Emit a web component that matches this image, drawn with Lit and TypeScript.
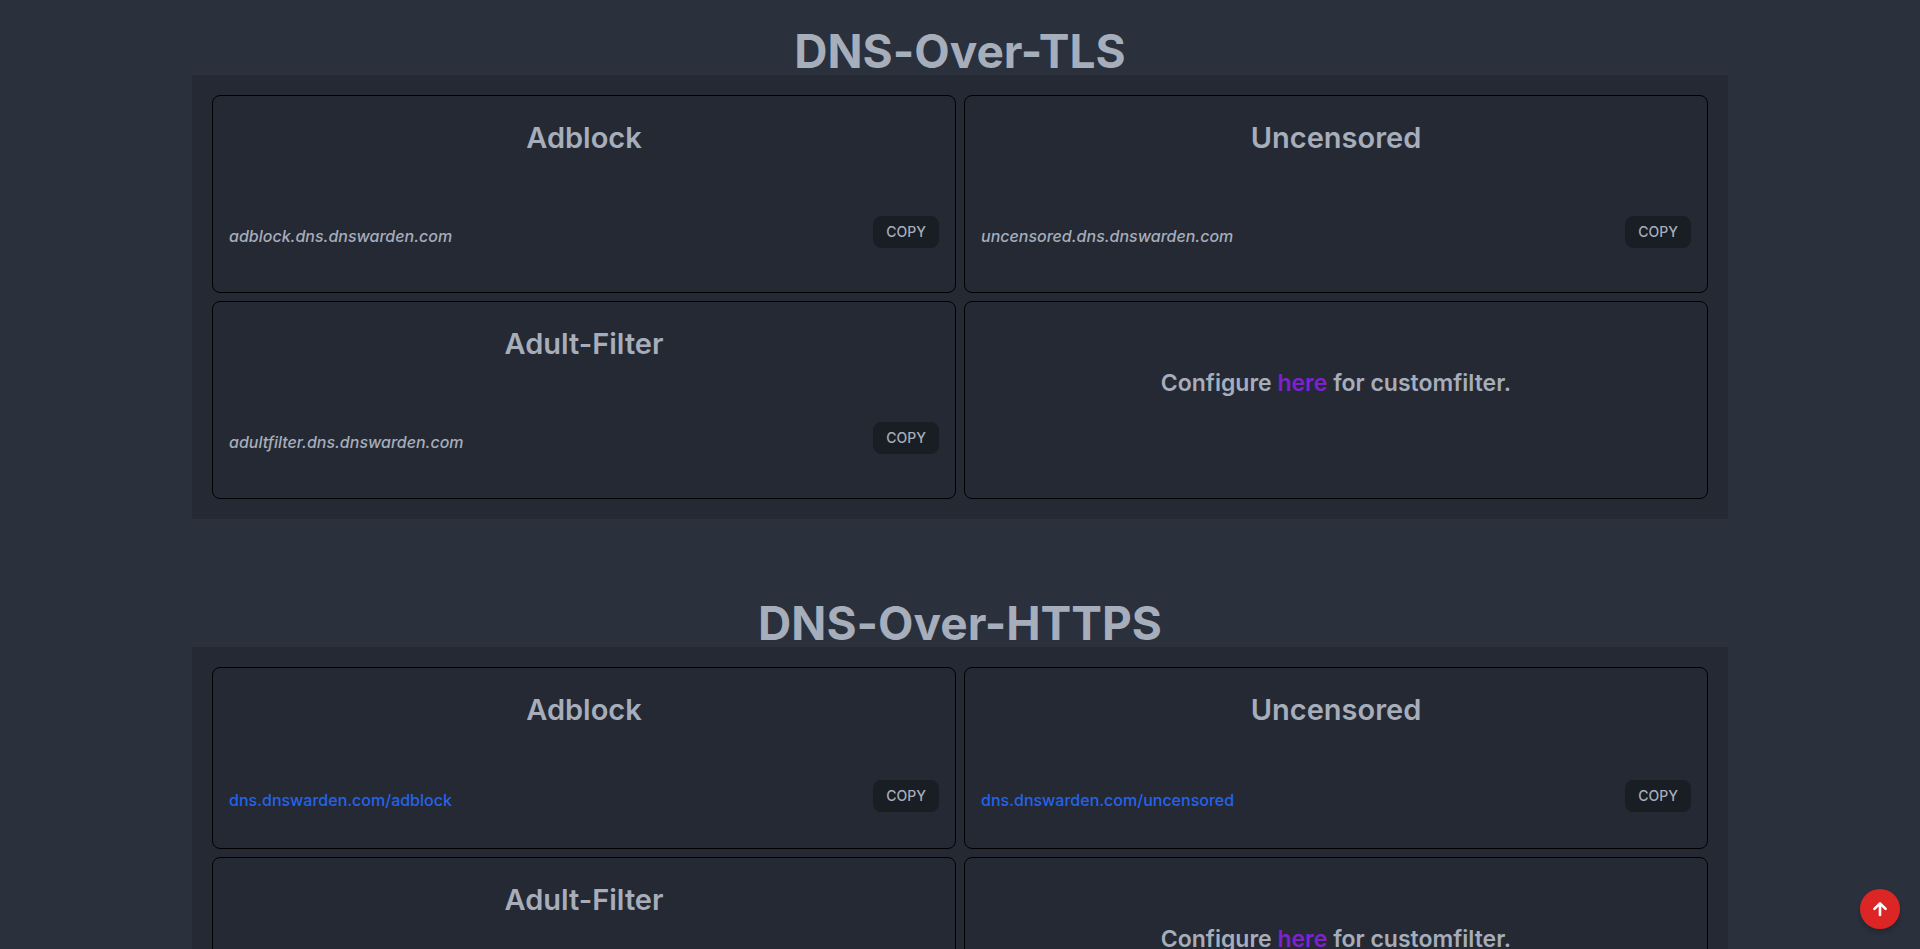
import { LitElement, html, css } from "lit";
import { customElement, property } from "lit/decorators.js";

interface Resolver {
  name: string;
  address: string;
}

const TLS: Resolver[] = [
  { name: "Adblock", address: "adblock.dns.dnswarden.com" },
  { name: "Uncensored", address: "uncensored.dns.dnswarden.com" },
  { name: "Adult-Filter", address: "adultfilter.dns.dnswarden.com" },
];

const HTTPS: Resolver[] = [
  { name: "Adblock", address: "dns.dnswarden.com/adblock" },
  { name: "Uncensored", address: "dns.dnswarden.com/uncensored" },
  { name: "Adult-Filter", address: "dns.dnswarden.com/adultfilter" },
];

@customElement("resolver-section")
export class ResolverSection extends LitElement {
  @property() heading = "";
  @property({ attribute: false }) resolvers: Resolver[] = [];
  @property({ type: Boolean }) linked = false;

  static styles = css`
    :host {
      display: block;
    }
    * {
      box-sizing: border-box;
      margin: 0;
    }
    .heading {
      font-size: 46px;
      line-height: 48px;
      font-weight: 700;
      text-align: center;
    }
    .panel {
      display: grid;
      grid-template-columns: repeat(2, minmax(0, 1fr));
      gap: 8px;
      width: 80%;
      margin: 0 auto;
      padding: 20px;
      background: #242933;
    }
    .card {
      display: flex;
      flex-direction: column;
      gap: 60px;
      padding: 24px 16px 44px;
      border: 1px solid #000;
      border-radius: 8px;
    }
    .card.compact {
      gap: 52px;
      padding-bottom: 36px;
    }
    .card.custom {
      padding-top: 64px;
    }
    .name {
      font-size: 29px;
      line-height: 36px;
      font-weight: 600;
      text-align: center;
    }
    .row {
      display: flex;
      justify-content: space-between;
      align-items: flex-end;
    }
    .address {
      font-size: 16px;
      line-height: 24px;
      font-weight: 500;
    }
    a {
      text-decoration: none;
    }
    a.address {
      color: #2563eb;
    }
    .copy {
      height: 32px;
      padding: 0 12px;
      border: 1px solid #191d24;
      border-radius: 8px;
      background: #191d24;
      color: inherit;
      font: 500 14px/14px Inter, sans-serif;
      text-transform: uppercase;
      cursor: pointer;
    }
    .note {
      font-size: 23px;
      line-height: 34px;
      font-weight: 600;
      text-align: center;
    }
    .note a {
      color: #7e22ce;
    }
  `;

  private copy(text: string) {
    navigator.clipboard?.writeText(text);
  }

  render() {
    const size = this.linked ? "compact" : "";
    return html`
      <h1 class="heading">${this.heading}</h1>
      <div class="panel">
        ${this.resolvers.map(
          (r) => html`
            <article class="card ${size}">
              <h2 class="name">${r.name}</h2>
              <div class="row">
                ${this.linked
                  ? html`<a class="address" href="https://${r.address}">${r.address}</a>`
                  : html`<em class="address">${r.address}</em>`}
                <button class="copy" @click=${() => this.copy(r.address)}>Copy</button>
              </div>
            </article>
          `
        )}
        <article class="card custom ${size}">
          <p class="note">Configure <a href="#custom">here</a> for customfilter.</p>
        </article>
      </div>
    `;
  }
}

@customElement("app-root")
export class AppRoot extends LitElement {
  static styles = css`
    :host {
      display: block;
      height: 100vh;
      overflow: hidden;
      background: #2a303c;
      color: #a6adbb;
      font-family: Inter, "Liberation Sans", sans-serif;
      font-feature-settings: "calt" 0;
    }
    .page {
      display: flex;
      flex-direction: column;
      gap: 80px;
      padding-top: 27px;
    }
    .top {
      position: fixed;
      right: 20px;
      bottom: 20px;
      display: flex;
      align-items: center;
      justify-content: center;
      width: 40px;
      height: 40px;
      padding: 0;
      border: 0;
      border-radius: 50%;
      background: #dc2626;
      color: #fff;
      box-shadow: 0 4px 6px -1px rgba(0, 0, 0, 0.2), 0 2px 4px -1px rgba(0, 0, 0, 0.1);
      cursor: pointer;
    }
    .arrow {
      display: block;
      width: 16px;
      height: 16px;
    }
  `;

  private toTop() {
    window.scrollTo({ top: 0, behavior: "smooth" });
  }

  render() {
    return html`
      <main class="page">
        <resolver-section heading="DNS-Over-TLS" .resolvers=${TLS}></resolver-section>
        <resolver-section heading="DNS-Over-HTTPS" .resolvers=${HTTPS} linked></resolver-section>
      </main>
      <button class="top" aria-label="Back to top" @click=${this.toTop}>
        <svg class="arrow" viewBox="0 0 16 16" fill="none" stroke="currentColor"
          stroke-width="2.6" stroke-linecap="round" stroke-linejoin="round">
          <path d="M8 14V2.6M2.4 7.9L8 2.3L13.6 7.9" />
        </svg>
      </button>
    `;
  }
}
